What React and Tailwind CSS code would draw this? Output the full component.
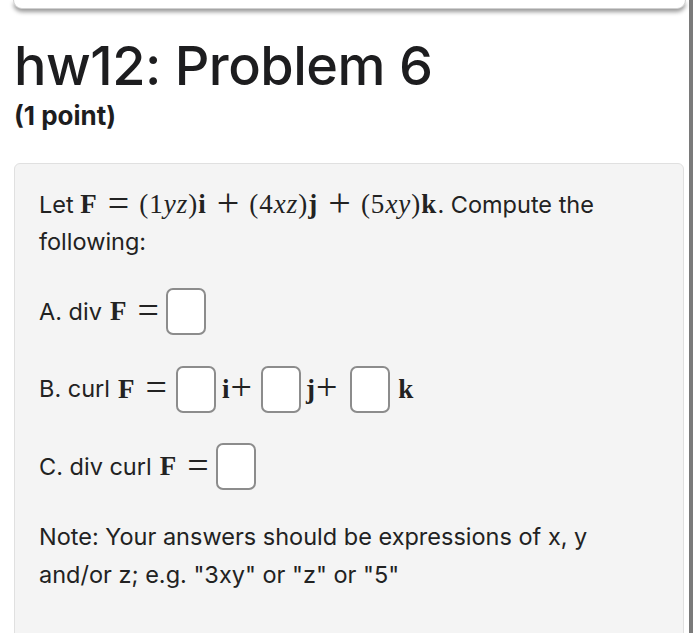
import React from 'react';

// math pieces, set in a serif face to stand in for the TeX renderer
function M({ children, className = '' }) {
  return (
    <span className={`font-['Liberation_Serif',serif] text-[27px] tracking-[1px] ${className}`}>{children}</span>
  );
}

function Op({ children, className = '' }) {
  return (
    <span className={`relative top-[3px] font-['Liberation_Serif',serif] text-[38px] leading-[0] ${className}`}>
      {children}
    </span>
  );
}

function Blank({ className = '' }) {
  return (
    <span
      className={`inline-block shrink-0 w-[40px] h-[47px] bg-white border-2 border-[#8c8c8c] rounded-[7px] ${className}`}
    />
  );
}

function RowOp({ children, className = '' }) {
  return (
    <span className={`font-['Liberation_Serif',serif] text-[38px] leading-none -translate-y-[2px] ${className}`}>
      {children}
    </span>
  );
}

export default function App() {
  return (
    <div className="relative w-[700px] h-[633px] overflow-hidden bg-white text-[#222] font-['Inter','Liberation_Sans',sans-serif]">
      {/* top card remainder */}
      <div className="ml-[13px] w-[673px] h-[9px] bg-white border border-t-0 border-[#d0d0d0] rounded-b-[10px] shadow-[0_3px_4px_rgba(0,0,0,0.4)]" />

      {/* scrollbar */}
      <div className="absolute top-0 left-[689px] w-[4px] h-[633px] bg-[#7a7a7a]" />

      <div className="pl-[14px] pt-[25px]">
        <h1 className="text-[54px] leading-[64px] font-medium tracking-[-0.5px] text-[#1d1d1f]">
          hw12: Problem 6
        </h1>
        <div className="mt-[3px] text-[26px] leading-[30px] font-bold text-[#1d1d1f]">(1 point)</div>
      </div>

      <div className="ml-[14px] mt-[32px] w-[670px] h-[500px] bg-[#f4f4f4] border border-[#e0e0e0] rounded-[6px] px-[24px] pt-[22px] text-[23.5px] text-[#222]">
        <p className="leading-[37px]">
          Let <M className="font-bold tracking-normal">F</M>
          <Op className="ml-[11px] mr-[10px]">=</Op>
          <M>(1<i>yz</i>)<b>i</b></M>
          <Op className="mx-[10px] text-[40px]">+</Op>
          <M>(4<i>xz</i>)<b>j</b></M>
          <Op className="mx-[10px] text-[40px]">+</Op>
          <M>(5<i>xy</i>)<b>k</b></M>. Compute the following:
        </p>

        <div className="mt-[28px] flex items-center h-[47px]">
          <span className="leading-none">A. div</span>
          <M className="font-bold ml-[8px] leading-none">F</M>
          <RowOp className="ml-[10px]">=</RowOp>
          <Blank className="ml-[7px]" />
        </div>

        <div className="mt-[30px] flex items-center h-[48px]">
          <span className="leading-none">B. curl</span>
          <M className="font-bold ml-[8px] leading-none">F</M>
          <RowOp className="ml-[10px]">=</RowOp>
          <Blank className="ml-[9px]" />
          <M className="font-bold ml-[6px] leading-none">i</M>
          <RowOp>+</RowOp>
          <Blank className="ml-[9px]" />
          <M className="font-bold ml-[5px] leading-none">j</M>
          <RowOp>+</RowOp>
          <Blank className="ml-[13px]" />
          <M className="font-bold ml-[8px] leading-none">k</M>
        </div>

        <div className="mt-[30px] flex items-center h-[47px]">
          <span className="leading-none">C. div curl</span>
          <M className="font-bold ml-[8px] leading-none">F</M>
          <RowOp className="ml-[10px]">=</RowOp>
          <Blank className="ml-[7px]" />
        </div>

        <p className="mt-[28px] leading-[38px] w-[590px]">
          Note: Your answers should be expressions of x, y and/or z; e.g. "3xy" or "z" or "5"
        </p>
      </div>
    </div>
  );
}
